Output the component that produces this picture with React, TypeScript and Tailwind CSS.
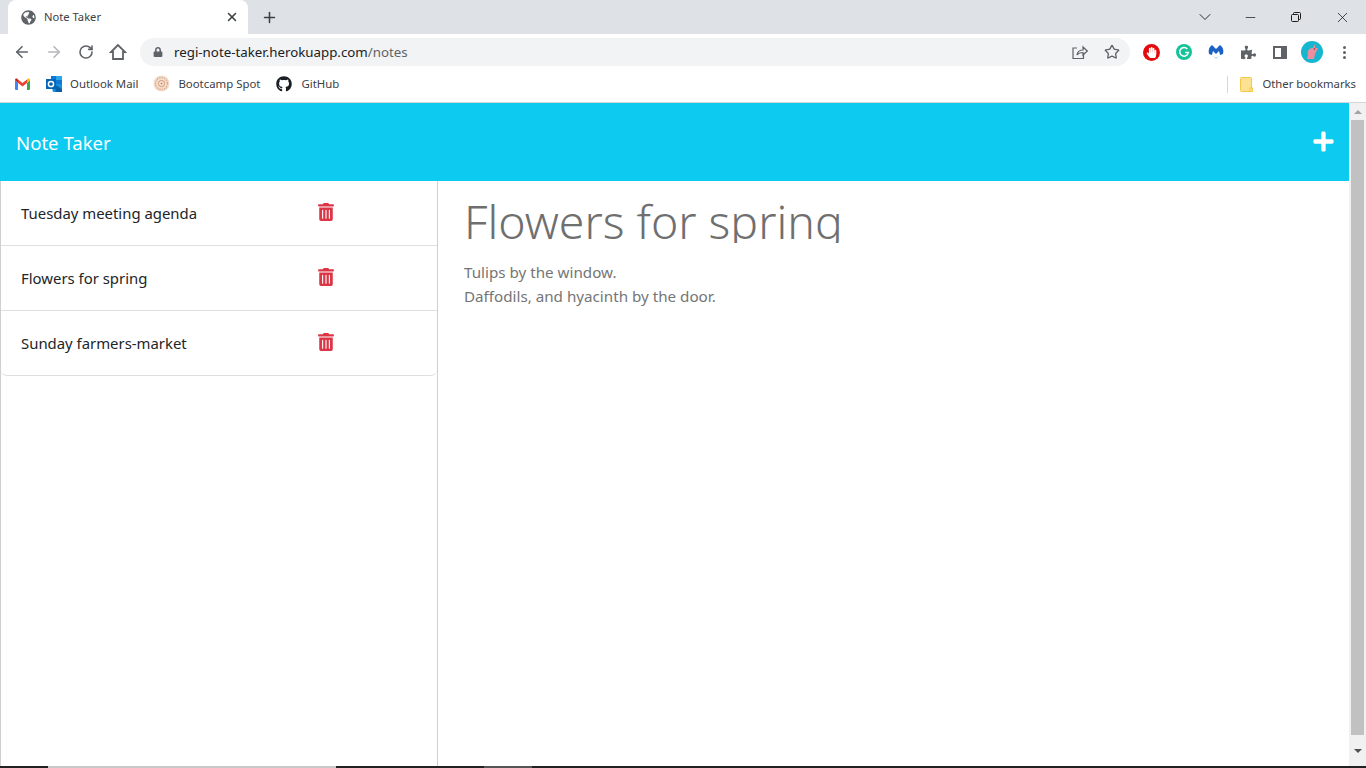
import React from "react";
import { ArrowLeft, ArrowRight, RotateCw, Star, ChevronDown, Minus, X, Plus } from "lucide-react";
import { FaTrashAlt, FaPlus, FaGlobeAmericas, FaLock, FaGithub, FaPuzzlePiece, FaHandPaper } from "react-icons/fa";

const notes = ["Tuesday meeting agenda", "Flowers for spring", "Sunday farmers-market"];

function Gmail() {
  return (
    <svg width="15" height="12" viewBox="0 0 15 12">
      <path d="M0 2 V11 a1 1 0 0 0 1 1 H3 V5 Z" fill="#4285f4" />
      <path d="M15 2 V11 a1 1 0 0 1 -1 1 H12 V5 Z" fill="#34a853" />
      <path d="M3 5 L7.5 8.5 L12 5 V1.5 L7.5 5 L3 1.5 Z" fill="#ea4335" />
      <path d="M0 2 L3 5 V1.5 L2 .6 C1 0 0 .7 0 2Z" fill="#c5221f" />
      <path d="M15 2 L12 5 V1.5 L13 .6 C14 0 15 .7 15 2Z" fill="#fbbc04" />
    </svg>
  );
}

function Outlook() {
  return (
    <svg width="16" height="16" viewBox="0 0 16 16">
      <rect x="5" y="0" width="11" height="8" fill="#0f78d4" />
      <rect x="10" y="0" width="6" height="4" fill="#28a8ea" />
      <path d="M5 8 H16 V16 H7 Z" fill="#1490df" />
      <path d="M8 8 L16 13 V16 H10 Z" fill="#0a5fa8" />
      <rect x="0" y="3" width="10" height="10" fill="#0364b8" />
      <circle cx="5" cy="8" r="2.6" fill="none" stroke="#fff" strokeWidth="1.5" />
    </svg>
  );
}

function Bootcamp() {
  return (
    <svg width="17" height="17" viewBox="0 0 17 17">
      <circle cx="8.5" cy="8.5" r="8" fill="#f3dccb" />
      <circle cx="8.5" cy="8.5" r="6" fill="none" stroke="#dca585" strokeWidth="1.2" strokeDasharray="1.5 1" />
      <circle cx="8.5" cy="8.5" r="3" fill="#fbeee4" stroke="#d38f6a" />
      <circle cx="8.5" cy="8.5" r="1" fill="#c87b52" />
    </svg>
  );
}

function Malware() {
  return (
    <svg width="16" height="14" viewBox="0 0 16 14">
      <path d="M4 0 L8 4 L12 0 C15 2 16 5 15 9 L12 10 L11 6 L8 9 L5 6 L4 10 L1 9 C0 5 1 2 4 0Z" fill="#1b62c4" />
      <path d="M5 11 C6 13 10 13 11 11 L8 13.5Z" fill="#4a90e2" />
    </svg>
  );
}

function Grammarly() {
  return (
    <svg width="16" height="16" viewBox="0 0 16 16">
      <circle cx="8" cy="8" r="8" fill="#15c39a" />
      <path d="M11.300 5 A4.300 4.300 0 1 0 12.300 8.500 H9" fill="none" stroke="#fff" strokeWidth="1.500" />
    </svg>
  );
}

function HomeIcon() {
  return (
    <svg width="18" height="18" viewBox="0 0 18 18" fill="none" stroke="#5f6368" strokeWidth="1.800" strokeLinejoin="miter">
      <path d="M9 2 L2 9 H4 V16 H14 V9 H16 Z" />
    </svg>
  );
}

function Avatar() {
  return (
    <div className="flex h-[22px] w-[22px] items-center justify-center rounded-full bg-[#17b6cf]">
      <svg width="14" height="16" viewBox="0 0 14 16">
        <path d="M10 0 L8 4 C4 4 2 7 3 11 L2 15 H9 L10 10 L12 6 L13 4 L10 4 Z" fill="#ee8d9d" />
        <circle cx="9.5" cy="5" r=".8" fill="#7a2b3a" />
      </svg>
    </div>
  );
}

function Restore() {
  return (
    <svg width="10" height="10" viewBox="0 0 10 10" fill="none" stroke="#1c1c1c" strokeWidth="1">
      <rect x=".5" y="2.5" width="7" height="7" rx="1" />
      <path d="M2.5 2.5 V1.5 a1 1 0 0 1 1 -1 H8.5 a1 1 0 0 1 1 1 V6.5 a1 1 0 0 1 -1 1 H7.5" />
    </svg>
  );
}

function Share() {
  return (
    <svg width="16" height="15" viewBox="0 0 16 15" fill="none" stroke="#5f6368" strokeWidth="1.2">
      <path d="M5 3 H1 V13.5 H11.5 V10" />
      <path d="M5 10 C5.500 6.500 8 5 11 5 V2 L15.300 6 L11 10 V7.500 C8.500 7.500 6.500 8 5 10Z" />
    </svg>
  );
}

function SidePanel() {
  return (
    <div className="flex h-[13px] w-[14px] border-2 border-[#5f6368]">
      <div className="flex-1 bg-white" />
      <div className="w-[4px] bg-[#5f6368]" />
    </div>
  );
}

function Folder() {
  return (
    <svg width="13" height="15" viewBox="0 0 13 15">
      <path d="M.5 1.500 a1 1 0 0 1 1 -1 H10.500 a1 1 0 0 1 1 1 V14.500 H1.500 a1 1 0 0 1 -1 -1Z" fill="#fde293" stroke="#f2c94c" />
      <rect x="10" y="11" width="2.500" height="3.500" fill="#fde293" stroke="#f2c94c" />
    </svg>
  );
}

function Bookmark({ icon, label, gap }: { icon: React.ReactNode; label: string; gap: string }) {
  return (
    <div className={`flex items-center ${gap}`}>
      {icon}
      <span className="text-[11.400px] text-[#3c4043]">{label}</span>
    </div>
  );
}

function BrowserChrome() {
  return (
    <div className="shrink-0 font-['Noto_Sans',sans-serif]">
      <div className="flex h-[34px] items-center bg-[#dee1e6] pl-2">
        <div className="flex h-[34px] w-[240px] items-center rounded-t-lg bg-white pl-[13px] pr-[9px]">
          <FaGlobeAmericas className="text-[15px] text-[#5f6368]" />
          <span className="ml-[8px] flex-1 text-[11.200px] text-[#3c4043]">Note Taker</span>
          <X size={14} strokeWidth={2.600} className="text-[#3c4043]" />
        </div>
        <Plus size={17} strokeWidth={2.200} className="ml-[13px] text-[#3c4043]" />
        <div className="ml-auto flex items-center">
          <ChevronDown size={20} strokeWidth={1.100} className="mr-[28px] text-[#1c1c1c]" />
          <Minus size={15} strokeWidth={1.200} className="mr-[33px] text-[#1c1c1c]" />
          <Restore />
          <X size={17} strokeWidth={1.100} className="ml-[33px] mr-[15px] text-[#1c1c1c]" />
        </div>
      </div>
      <div className="flex h-[36px] items-center bg-white pl-[13px]">
        <ArrowLeft size={18} strokeWidth={2.200} className="text-[#5f6368]" />
        <ArrowRight size={18} strokeWidth={2.200} className="ml-[14px] text-[#b5b7ba]" />
        <RotateCw size={16} strokeWidth={2.400} className="ml-[15px] text-[#5f6368]" />
        <div className="ml-[15px]"><HomeIcon /></div>
        <div className="ml-[13px] flex h-[28px] w-[990px] items-center rounded-full bg-[#f1f3f4] pl-[13px] pr-[10px]">
          <FaLock className="text-[10px] text-[#5f6368]" />
          <span className="ml-[11px] flex-1 pt-[1px] text-[13.300px] text-[#202124]">
            regi-note-taker.herokuapp.com<span className="text-[#5f6368]">/notes</span>
          </span>
          <Share />
          <Star size={16} strokeWidth={2} className="ml-[16px] text-[#5f6368]" />
        </div>
        <div className="ml-[13px] flex items-center">
          <div className="flex h-[17px] w-[17px] items-center justify-center rounded-full bg-[#e30b0b]">
            <FaHandPaper className="text-[11px] text-white" />
          </div>
          <div className="ml-[16px]"><Grammarly /></div>
          <div className="ml-[16px]"><Malware /></div>
          <FaPuzzlePiece className="ml-[17px] text-[15px] text-[#5f6368]" />
          <div className="ml-[17px]"><SidePanel /></div>
          <div className="ml-[14px]"><Avatar /></div>
          <div className="ml-[20px] flex flex-col gap-[2px]">
            <div className="h-[3px] w-[3px] rounded-full bg-[#5f6368]" />
            <div className="h-[3px] w-[3px] rounded-full bg-[#5f6368]" />
            <div className="h-[3px] w-[3px] rounded-full bg-[#5f6368]" />
          </div>
        </div>
      </div>
      <div className="flex h-[33px] items-center border-b border-[#d5d6d8] bg-white pb-[4px] pl-[15px]">
        <Gmail />
        <div className="ml-[16px]"><Bookmark icon={<Outlook />} label="Outlook Mail" gap="gap-[8px]" /></div>
        <div className="ml-[15px]"><Bookmark icon={<Bootcamp />} label="Bootcamp Spot" gap="gap-[8px]" /></div>
        <div className="ml-[16px]"><Bookmark icon={<FaGithub className="text-[16px] text-[#1b1f23]" />} label="GitHub" gap="gap-[9px]" /></div>
        <div className="ml-auto flex items-center pr-[10px]">
          <div className="mr-[12px] h-[17px] w-px bg-[#d5d6d8]" />
          <Folder />
          <span className="ml-[9px] text-[11.300px] text-[#3c4043]">Other bookmarks</span>
        </div>
      </div>
    </div>
  );
}

function Scrollbar() {
  return (
    <div className="flex w-[17px] shrink-0 flex-col items-center bg-[#f1f1f1]">
      <div className="flex h-[17px] items-center justify-center">
        <div className="h-0 w-0 border-x-[4px] border-b-[4px] border-x-transparent border-b-[#a3a3a3]" />
      </div>
      <div className="w-[13px] flex-1 bg-[#c1c1c1]" />
      <div className="flex h-[31px] items-center justify-center">
        <div className="h-0 w-0 border-x-[4px] border-t-[4px] border-x-transparent border-t-[#505050]" />
      </div>
    </div>
  );
}

export default function App() {
  return (
    <div className="flex h-screen w-full flex-col overflow-hidden bg-white">
      <BrowserChrome />
      <div className="flex min-h-0 flex-1 font-['Noto_Sans',sans-serif]">
        <div className="flex min-w-0 flex-1 flex-col">
          <header className="flex h-[78px] shrink-0 items-center justify-between bg-[#0dcaf0] pl-[16px] pr-[14px]">
            <span className="pt-[2px] text-[18.600px] text-white">Note Taker</span>
            <FaPlus className="mb-[2px] text-[23px] text-white" />
          </header>
          <main className="flex min-h-0 flex-1">
            <aside className="w-[438px] shrink-0 border-x border-[#cfcfcf]">
              <ul className="rounded-b-md border-b border-[#dfdfdf]">
                {notes.map((n, i) => (
                  <li key={n} className={`flex items-center pl-[20px] ${i < 2 ? "h-[65px] border-b border-[#dfdfdf]" : "h-[64px]"}`}>
                    <span className="w-[296px] text-[14.900px] text-[#212529]">{n}</span>
                    <FaTrashAlt className="mb-[2px] text-[18px] text-[#dc3545]" />
                  </li>
                ))}
              </ul>
            </aside>
            <section className="flex-1 pl-[26px] pt-[14px]">
              <div className="h-[48px] overflow-hidden text-[46.400px] font-light leading-[53px] text-[#6f6f6f]">Flowers for spring</div>
              <div className="mt-[17px] text-[15.200px] leading-[24px] text-[#757575]">
                <p>Tulips by the window.</p>
                <p>Daffodils, and hyacinth by the door.</p>
              </div>
            </section>
          </main>
        </div>
        <Scrollbar />
      </div>
      <div className="flex h-[2px] shrink-0 bg-[#222222]">
        <div className="ml-[48px] h-full w-[288px] bg-[#c8c8c8]" />
        <div className="ml-[148px] h-full w-[48px] bg-[#555555]" />
      </div>
    </div>
  );
}
